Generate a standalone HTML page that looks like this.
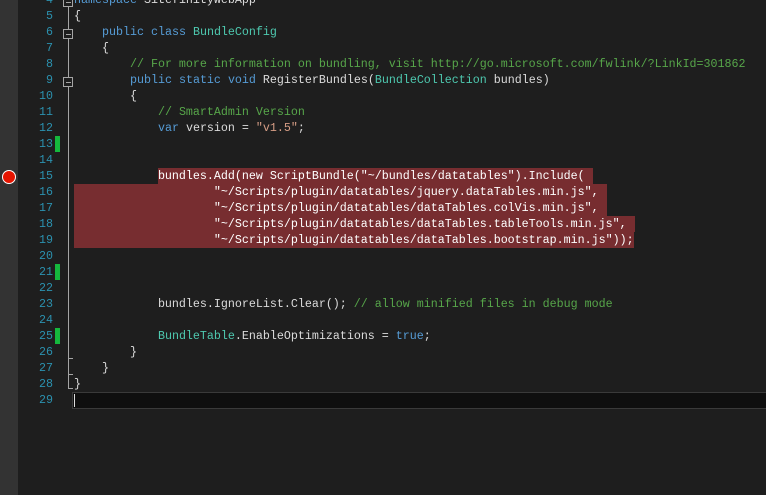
<!DOCTYPE html><html><head><style>
body{margin:0;width:766px;height:495px;background:#1e1e1e;overflow:hidden;position:relative;font-family:"Liberation Mono",monospace;font-size:11.67px}
.m{position:absolute;left:0;top:0;width:18px;height:495px;background:#333333}
pre{position:absolute;margin:0;font:inherit;line-height:16px;color:#dcdcdc;white-space:pre}
.code{left:74px;top:-8px}
.lns{left:20px;top:-8px;width:33px;text-align:right;color:#2b91af}
.k{color:#569cd6}.t{color:#4ec9b0}.s{color:#d69d85}.c{color:#57a64a}.w{color:#fff}
.sel{position:absolute;background:#772d30;height:16px}
.g{position:absolute;left:55px;width:5px;height:16px;background:#15b83d}
.fb{position:absolute;left:63px;width:8px;height:8px;border:1px solid #a5a5a5;background:#1e1e1e}
.fb:after{content:"";position:absolute;left:2px;top:4px;width:5px;height:1px;background:#a5a5a5}
</style></head><body>
<div class="m"></div>
<div style="position:absolute;left:3px;top:171px;width:12px;height:12px;border-radius:50%;background:#e51400;box-shadow:0 0 0 1px #fff"></div>
<pre class="lns">4
5
6
7
8
9
10
11
12
13
14
15
16
17
18
19
20
21
22
23
24
25
26
27
28
29</pre>
<div class="g" style="top:136px"></div><div class="g" style="top:264px"></div><div class="g" style="top:328px"></div>
<div style="position:absolute;left:68px;top:0;width:1px;height:388px;background:#a5a5a5"></div>
<div style="position:absolute;left:68px;top:358px;width:5px;height:1px;background:#a5a5a5"></div>
<div style="position:absolute;left:68px;top:374px;width:5px;height:1px;background:#a5a5a5"></div>
<div style="position:absolute;left:68px;top:388px;width:5px;height:1px;background:#a5a5a5"></div>
<div class="fb" style="top:-3px"></div><div class="fb" style="top:29px"></div><div class="fb" style="top:77px"></div>
<div style="position:absolute;left:72px;top:392px;width:700px;height:15px;border:1px solid #3a3a3a;background:#0f0f0f"></div>
<div style="position:absolute;left:74px;top:394px;width:1px;height:13px;background:#ddd"></div>
<div class="sel" style="left:158px;top:168px;width:435px"></div>
<div class="sel" style="left:74px;top:184px;width:533px"></div>
<div class="sel" style="left:74px;top:200px;width:533px"></div>
<div class="sel" style="left:74px;top:216px;width:561px"></div>
<div class="sel" style="left:74px;top:232px;width:560px"></div>
<pre class="code"><span class="k">namespace</span> SitefinityWebApp
{
    <span class="k">public</span> <span class="k">class</span> <span class="t">BundleConfig</span>
    {
        <span class="c">// For more information on bundling, visit http://go.microsoft.com/fwlink/?LinkId=301862</span>
        <span class="k">public</span> <span class="k">static</span> <span class="k">void</span> RegisterBundles(<span class="t">BundleCollection</span> bundles)
        {
            <span class="c">// SmartAdmin Version</span>
            <span class="k">var</span> version = <span class="s">"v1.5"</span>;


<span class="w">            bundles.Add(new ScriptBundle("~/bundles/datatables").Include(
                    "~/Scripts/plugin/datatables/jquery.dataTables.min.js",
                    "~/Scripts/plugin/datatables/dataTables.colVis.min.js",
                    "~/Scripts/plugin/datatables/dataTables.tableTools.min.js",
                    "~/Scripts/plugin/datatables/dataTables.bootstrap.min.js"));</span>



            bundles.IgnoreList.Clear(); <span class="c">// allow minified files in debug mode</span>

            <span class="t">BundleTable</span>.EnableOptimizations = <span class="k">true</span>;
        }
    }
}
</pre>
</body></html>
